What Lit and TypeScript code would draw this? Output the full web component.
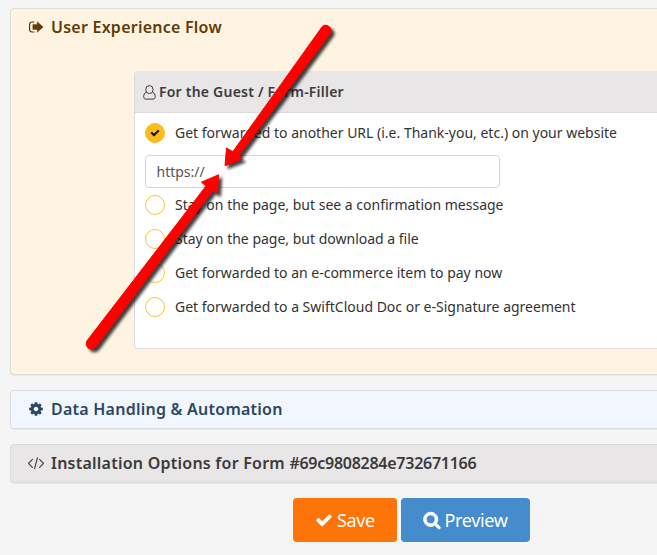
import { LitElement, html, css, svg } from "lit";
import { customElement, property, state } from "lit/decorators.js";
import { classMap } from "lit/directives/class-map.js";

const ICONS = {
  cog: "M1152 896q0-106-75-181t-181-75-181 75-75 181 75 181 181 75 181-75 75-181zm512-109v222q0 12-8 23t-20 13l-185 28q-19 54-39 91 35 50 107 138 10 12 10 25t-9 23q-27 37-99 108t-94 71q-12 0-26-9l-138-108q-44 23-91 38-16 136-29 186-7 28-36 28h-222q-14 0-24.5-8.5t-11.5-21.5l-28-184q-49-16-90-37l-141 107q-10 9-25 9-14 0-25-11-126-114-165-168-7-10-7-23 0-12 8-23 15-21 51-66.5t54-70.5q-27-50-41-99l-183-27q-13-2-21-12.5t-8-23.5v-222q0-12 8-23t19-13l186-28q14-46 39-92-40-57-107-138-10-12-10-24 0-10 9-23 26-36 98.5-107.5t94.5-71.5q13 0 26 10l138 107q44-23 91-38 16-136 29-186 7-28 36-28h222q14 0 24.5 8.5t11.5 21.5l28 184q49 16 90 37l142-107q9-9 24-9 13 0 25 10 129 119 165 170 7 8 7 22 0 12-8 23-15 21-51 66.5t-54 70.5q26 50 41 98l183 28q13 2 21 12.5t8 23.5z",
  check: "M1671 566q0 40-28 68l-724 724-136 136q-28 28-68 28t-68-28l-136-136-362-362q-28-28-28-68t28-68l136-136q28-28 68-28t68 28l294 295 656-657q28-28 68-28t68 28l136 136q28 28 28 68z",
  search: "M1216 832q0-185-131.5-316.5t-316.5-131.5-316.5 131.5-131.5 316.5 131.5 316.5 316.5 131.5 316.5-131.5 131.5-316.5zm512 832q0 52-38 90t-90 38q-54 0-90-38l-343-342q-179 124-399 124-143 0-273.5-55.5t-225-150-150-225-55.5-273.5 55.5-273.5 150-225 225-150 273.5-55.5 273.5 55.5 225 150 150 225 55.5 273.5q0 220-124 399l343 343q37 37 37 90z",
};

const solid = (name: keyof typeof ICONS, size: number, weight = 0) => html`
  <svg width=${size} height=${size} viewBox="0 0 1792 1792" fill="currentColor" stroke="currentColor" stroke-width=${weight} overflow="visible">${svg`<path d=${ICONS[name]} />`}</svg>`;

const signOut = html`
  <svg width="16" height="16" viewBox="0 0 16 16">
    <path d="M6 3H4Q1.6 3 1.6 5.4v5.2Q1.6 13 4 13h2" fill="none" stroke="currentColor" stroke-width="1.2" stroke-linecap="round" />
    <path d="M9.2 2.7 15.2 8l-6 5.3V10.6H4.8V5.4h4.4z" fill="currentColor" stroke="currentColor" stroke-width=".4" stroke-linejoin="round" />
  </svg>`;

const code = html`
  <svg width="18" height="16" viewBox="0 0 18 16" fill="none" stroke="currentColor" stroke-width="1.1" stroke-linecap="round" stroke-linejoin="round">
    <path d="M5.4 4.4 1.5 8.4l3.9 4M12.6 4.4l3.9 4-3.9 4M10.4 2.8 7.6 13.6" />
  </svg>`;

const person = html`
  <svg width="13" height="15" viewBox="0 0 13 15" fill="none" stroke="currentColor" stroke-width="1">
    <ellipse cx="6.4" cy="4.6" rx="3.7" ry="4" />
    <path d="M3.4 7C1.4 7.9.7 9.6.7 11.7c0 1.5.8 2.4 2.1 2.4h7.3c1.3 0 2.1-.9 2.1-2.4 0-2.1-.7-3.8-2.7-4.7" />
  </svg>`;

@customElement("flow-panel")
export class FlowPanel extends LitElement {
  @property() heading = "";
  @property() code = "";
  @property({ reflect: true }) tone = "";
  @property({ attribute: false }) icon: unknown;

  static styles = css`
    :host {
      display: block;
      box-sizing: border-box;
      border: 1px solid #dadbdd;
      border-radius: 4px;
      box-shadow: 0 1px 1px rgba(0, 0, 0, 0.05);
    }
    :host([tone="cream"]) { background: #fff4e1; color: #5f3c06; }
    :host([tone="blue"]) { background: #f2f7ff; color: #2c4762; }
    :host([tone="gray"]) { background: #e8e6e6; color: #3b3a3a; }
    .heading {
      display: flex;
      align-items: center;
      height: 35px;
      padding-left: 16px;
      font-size: 16px;
      font-weight: 600;
      letter-spacing: 0.24px;
      white-space: pre;
    }
    .code { letter-spacing: -0.26px; }
    .icon { display: flex; justify-content: center; width: 18px; margin-right: 6px; }
    svg { display: block; }
  `;

  render() {
    return html`
      <div class="heading"><span class="icon">${this.icon}</span><span>${this.heading}${this.code ? html` <span class="code">${this.code}</span>` : ""}</span></div>
      <slot></slot>
    `;
  }
}

@customElement("app-root")
export class AppRoot extends LitElement {
  @state() private selected = 0;

  private options = [
    "Get forwarded to another URL (i.e. Thank-you, etc.) on your website",
    "Stay on the page, but see a confirmation message",
    "Stay on the page, but download a file",
    "Get forwarded to an e-commerce item to pay now",
    "Get forwarded to a SwiftCloud Doc or e-Signature agreement",
  ];

  static styles = css`
    :host {
      display: block;
      position: relative;
      box-sizing: border-box;
      width: 100%;
      height: 555px;
      overflow: hidden;
      padding: 8px 0 0 10px;
      background: #f5f5f5;
      font: 14px/20px "Noto Sans", "Open Sans", sans-serif;
      color: #333;
    }
    svg { display: block; }
    .panels { display: flex; flex-direction: column; gap: 15px; margin-right: -20px; }
    .flow { height: 367px; }
    .bar { height: 39px; }
    .guest {
      box-sizing: border-box;
      height: 278px;
      margin: 27px 0 0 123px;
      border: 1px solid #dcdcdf;
      border-top-color: #e8e6e7;
      border-radius: 4px;
      background: #fff;
      color: #333;
    }
    .guest-head {
      display: flex;
      align-items: center;
      gap: 3px;
      height: 40px;
      padding-left: 8px;
      border-bottom: 1px solid #dddcdd;
      border-radius: 3px 3px 0 0;
      background: #e8e6e7;
      font-weight: 600;
      letter-spacing: 0.22px;
      color: #3b3b3b;
    }
    .options { padding: 3px 0 0 10px; }
    .option { display: flex; align-items: center; gap: 10px; height: 34px; cursor: pointer; white-space: nowrap; }
    .radio {
      display: flex;
      align-items: center;
      justify-content: center;
      box-sizing: border-box;
      width: 20px;
      height: 20px;
      border: 1px solid #f8c437;
      border-radius: 50%;
      color: #111;
    }
    .radio.on { background: #fbbc1d; border-color: #fbbc1d; }
    .url {
      display: block;
      box-sizing: border-box;
      width: 355px;
      height: 33px;
      margin: 5px 0 0;
      padding: 0 10.5px;
      border: 1px solid #d4d4d4;
      border-radius: 4px;
      background: #fff;
      font: inherit;
      color: #555;
      outline: none;
    }
    .actions { display: flex; gap: 4px; margin: 15px 0 0 283px; }
    .btn {
      display: flex;
      align-items: center;
      justify-content: center;
      gap: 4px;
      width: 104px;
      height: 44px;
      padding: 0;
      border: 0;
      border-radius: 4px;
      background: #ff7409;
      color: #fff;
      font: 18px/24px "Noto Sans", "Open Sans", sans-serif;
      letter-spacing: -0.35px;
    }
    .preview { width: 129px; gap: 3px; background: #448ccb; }
    .arrows { position: absolute; left: 0; top: 0; pointer-events: none; filter: drop-shadow(3px 3px 1.5px rgba(0, 0, 0, 0.75)); }
  `;

  private option(label: string, i: number) {
    const on = i === this.selected;
    return html`
      <div class="option" @click=${() => (this.selected = i)}>
        <span class=${classMap({ radio: true, on })}>${on ? solid("check", 10) : ""}</span>
        <span>${label}</span>
      </div>
      ${i === 0 ? html`<input class="url" value="https://" />` : ""}
    `;
  }

  render() {
    return html`
      <div class="panels">
        <flow-panel class="flow" tone="cream" heading="User Experience Flow" .icon=${signOut}>
          <section class="guest">
            <div class="guest-head">${person}<span>For the Guest / Form-Filler</span></div>
            <div class="options">${this.options.map((o, i) => this.option(o, i))}</div>
          </section>
        </flow-panel>
        <flow-panel class="bar" tone="blue" heading="Data Handling &amp; Automation" .icon=${solid("cog", 16)}></flow-panel>
        <flow-panel class="bar" tone="gray" heading="Installation Options for Form" code="#69c9808284e732671166" .icon=${code}></flow-panel>
      </div>
      <div class="actions">
        <button class="btn">${solid("check", 18)}<span>Save</span></button>
        <button class="btn preview">${solid("search", 18, 90)}<span>Preview</span></button>
      </div>
      <svg class="arrows" width="657" height="555" viewBox="0 0 657 555" fill="#fe0000" stroke="#fe0000" stroke-linejoin="round">
        <path d="M321.8 27.2Q324.2 24 327.8 25.7 332.6 28.6 330.6 33L238.4 156.5 242.4 159 225 165.7 226.5 148 232.8 151.7Z" />
        <path d="M86.8 341Q84.8 345.6 88.5 348.4 92.4 350.3 95.8 347L212.8 190.8 217.5 193.5 218.7 174.7 201.4 182.2 206.2 185.8Z" />
      </svg>
    `;
  }
}
